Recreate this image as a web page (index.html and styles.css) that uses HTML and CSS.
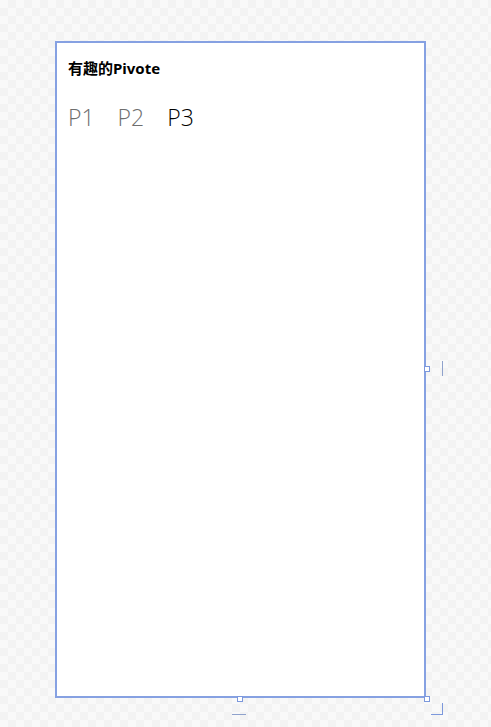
FILE: index.html
```html
<!DOCTYPE html>
<html lang="zh">
<head>
<meta charset="utf-8">
<title>有趣的Pivote</title>
<link rel="stylesheet" href="styles.css">
</head>
<body>
<div class="canvas">
  <div class="frame">
    <div class="pivot">
      <div class="pivot-title">有趣的Pivote</div>
      <div class="pivot-headers">
        <span class="pivot-item">P1</span>
        <span class="pivot-item">P2</span>
        <span class="pivot-item active">P3</span>
      </div>
    </div>
    <span class="handle handle-right"></span>
    <span class="tick tick-right"></span>
    <span class="handle handle-bottom"></span>
    <span class="tick tick-bottom"></span>
    <span class="handle handle-corner"></span>
    <span class="bracket"></span>
  </div>
</div>
</body>
</html>
```

FILE: styles.css
```css
html, body {
  margin: 0;
  padding: 0;
}
body {
  width: 491px;
  height: 727px;
  overflow: hidden;
  background-color: #f9f9f9;
  background-image: conic-gradient(#f3f3f3 25%, transparent 0 50%, #f3f3f3 0 75%, transparent 0);
  background-size: 16px 16px;
  font-family: "Open Sans", "Noto Sans CJK SC", sans-serif;
}
.canvas {
  padding: 41px 0 0 55px;
}
.frame {
  position: relative;
  box-sizing: border-box;
  width: 371px;
  height: 657px;
  background: #ffffff;
  border: 2px solid #86a1e2;
}
.pivot {
  padding: 15px 0 0 11px;
}
.pivot-title {
  font-family: "Noto Sans", "Noto Sans CJK SC", sans-serif;
  font-weight: 700;
  font-size: 15px;
  line-height: 20px;
  color: #000;
}
.pivot-headers {
  display: flex;
  gap: 23px;
  margin-top: 24px;
}
.pivot-item {
  font-family: "Open Sans", sans-serif;
  font-weight: 300;
  font-size: 23px;
  line-height: 30px;
  color: #6e6e6e;
}
.pivot-item.active {
  color: #000;
}
.handle {
  position: absolute;
  box-sizing: border-box;
  width: 6px;
  height: 6px;
  background: #fff;
  border: 1px solid #7c98dc;
}
.handle-right {
  left: 367px;
  top: 323px;
}
.handle-bottom {
  left: 180px;
  top: 653px;
}
.handle-corner {
  left: 367px;
  top: 653px;
}
.tick {
  position: absolute;
  background: #8fa2cc;
}
.tick-right {
  left: 385px;
  top: 318px;
  width: 1px;
  height: 15px;
}
.tick-bottom {
  left: 175px;
  top: 671px;
  width: 14px;
  height: 1px;
}
.bracket {
  position: absolute;
  box-sizing: border-box;
  left: 374px;
  top: 660px;
  width: 12px;
  height: 12px;
  border-right: 1px solid #7c98dc;
  border-bottom: 1px solid #7c98dc;
}
```
